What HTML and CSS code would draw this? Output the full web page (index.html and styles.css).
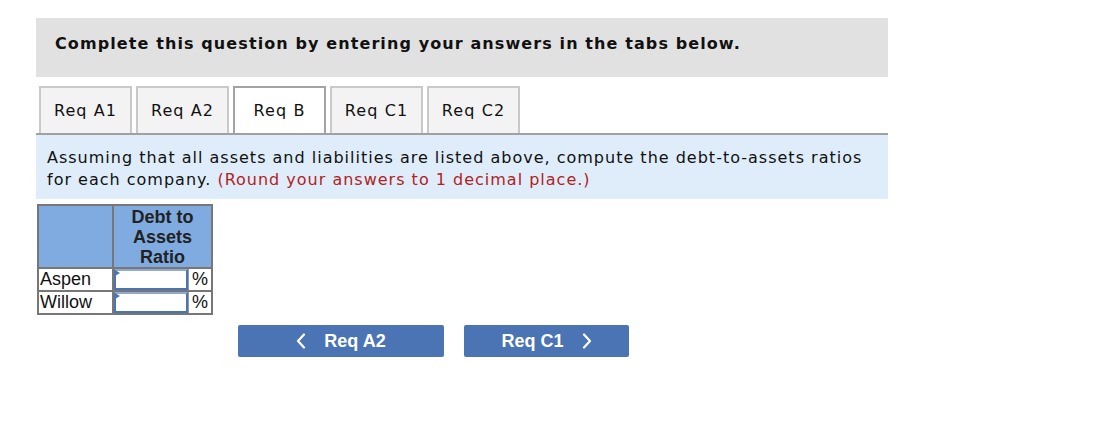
FILE: index.html
```html
<!DOCTYPE html>
<html>
<head lang="en">
    <meta charset="utf-8">
    <title>Req B</title>
    <link rel="stylesheet" href="styles.css">
</head>
<body>
<div class="question">
    <div class="head">Complete this question by entering your answers in the tabs below.</div>

    <div class="tabs">
        <div class="tab">Req A1</div>
        <div class="tab">Req A2</div>
        <div class="tab active">Req B</div>
        <div class="tab">Req C1</div>
        <div class="tab">Req C2</div>
    </div>

    <div class="prompt">
        Assuming that all assets and liabilities are listed above, compute the debt-to-assets ratios<br>
        for each company. <span class="hint">(Round your answers to 1 decimal place.)</span>
    </div>

    <table class="grid">
        <tr class="grid-head">
            <th class="name"></th>
            <th colspan="2">Debt to<br>Assets<br>Ratio</th>
        </tr>
        <tr>
            <td class="name">Aspen</td>
            <td class="cell"><span class="flag"></span><input type="text" class="answer"></td>
            <td class="unit">%</td>
        </tr>
        <tr>
            <td class="name">Willow</td>
            <td class="cell"><span class="flag"></span><input type="text" class="answer"></td>
            <td class="unit">%</td>
        </tr>
    </table>

    <div class="nav">
        <div class="button prev">
            <svg class="chevron" width="10" height="16" viewBox="0 0 10 16"><path d="M8 1.5 L2 8 L8 14.5" fill="none" stroke="#fff" stroke-width="2.2" stroke-linecap="round" stroke-linejoin="round"/></svg>
            <span>Req A2</span>
        </div>
        <div class="button next">
            <span>Req C1</span>
            <svg class="chevron" width="10" height="16" viewBox="0 0 10 16"><path d="M2 1.5 L8 8 L2 14.5" fill="none" stroke="#fff" stroke-width="2.2" stroke-linecap="round" stroke-linejoin="round"/></svg>
        </div>
    </div>
</div>
</body>
</html>
```

FILE: styles.css
```css
body {
    margin: 0;
    background: #fff;
    font-family: "DejaVu Sans", Verdana, sans-serif;
    color: #111;
}

.question {
    width: 852px;
    margin-left: 36px;
    padding-top: 18px;
}

.head {
    background: #e1e1e1;
    height: 59px;
    line-height: 52px;
    padding-left: 19px;
    font-size: 16px;
    font-weight: bold;
    letter-spacing: 1.1px;
}

.tabs {
    display: flex;
    gap: 4px;
    margin-top: 9px;
    padding-left: 3px;
    border-bottom: 2px solid #a0a0a0;
}

.tab {
    width: 89px;
    height: 45px;
    line-height: 45px;
    text-align: center;
    font-size: 16px;
    letter-spacing: 1.1px;
    background: #f3f3f3;
    border: 2px solid #c9c9c9;
    border-bottom: none;
}

.tab.active {
    background: #fff;
    border-color: #a3a3a3;
}

.prompt {
    background: #deedf9;
    padding: 12px 11px 8px;
    font-size: 16px;
    line-height: 22px;
    letter-spacing: 1px;
}

.hint {
    color: #b22222;
}

.grid {
    margin-top: 5px;
    margin-left: 1px;
    border-collapse: collapse;
    font-family: "Liberation Sans", Arial, sans-serif;
    font-size: 18px;
}

.grid th, .grid td {
    border: 2px solid #777;
    padding: 0;
}

.grid-head th {
    background: #80abe0;
    height: 59px;
    line-height: 20px;
    font-weight: bold;
    color: #222;
    vertical-align: top;
    padding-top: 1px;
}

.grid td {
    height: 21px;
    line-height: 19px;
}

.grid td.name {
    width: 72px;
    padding-left: 1px;
    text-align: left;
}

.grid td.cell {
    width: 74px;
    border-right: none;
    position: relative;
}

.grid td.unit {
    width: 22px;
    text-align: center;
    border-left: 1px solid #999;
}

.flag {
    position: absolute;
    left: 1px;
    top: 1px;
    width: 0;
    height: 0;
    border-top: 3px solid transparent;
    border-bottom: 3px solid transparent;
    border-left: 5px solid #4a74b4;
}

input.answer {
    display: block;
    width: 74px;
    height: 21px;
    box-sizing: border-box;
    border: 2px solid #4a74b4;
    border-top-color: #8fa9d1;
    margin: 0;
    padding: 0;
    background: #fff;
}

.nav {
    display: flex;
    gap: 20px;
    margin-top: 10px;
    margin-left: 202px;
}

.button {
    height: 32px;
    display: flex;
    align-items: center;
    justify-content: center;
    gap: 18px;
    background: #4a74b4;
    color: #fff;
    font-family: "Liberation Sans", Arial, sans-serif;
    font-weight: bold;
    font-size: 18px;
    border-radius: 2px;
}

.button.prev {
    width: 206px;
}

.button.next {
    width: 165px;
}
```
